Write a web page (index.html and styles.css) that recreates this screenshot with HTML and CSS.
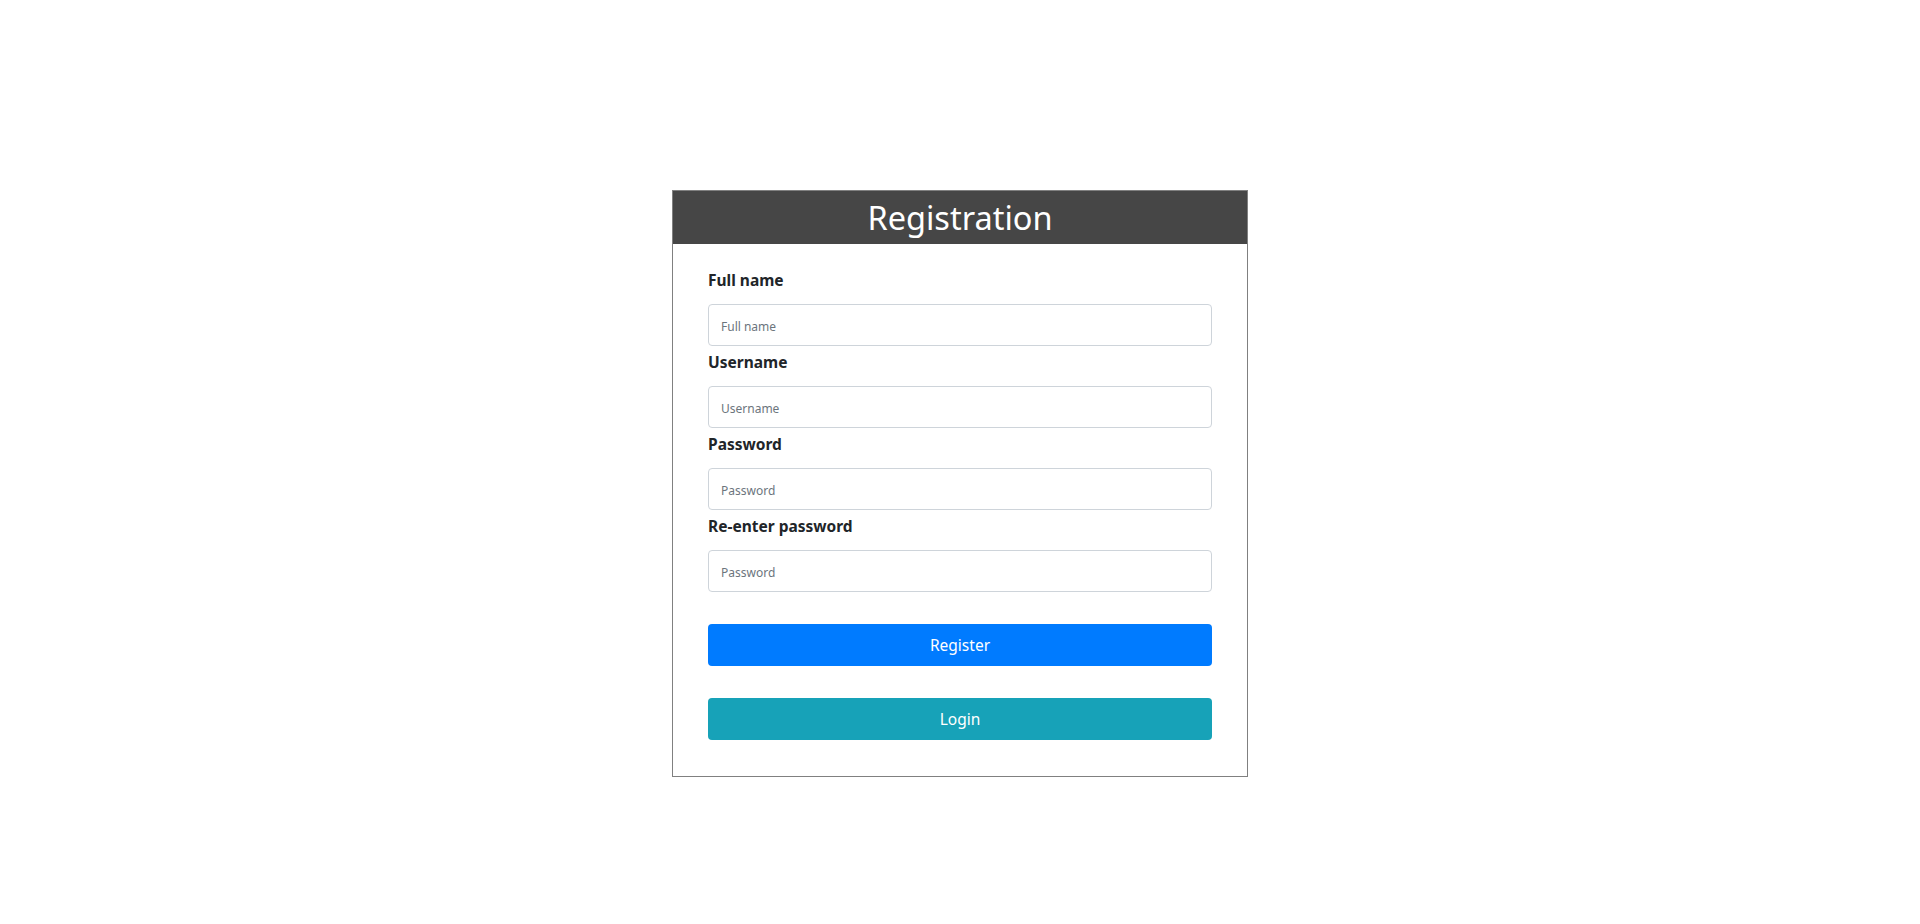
FILE: index.html
```html
<!DOCTYPE html>
<html lang="en">
<head>
  <meta charset="UTF-8">
  <title>Registration</title>
  <link rel="stylesheet" href="styles.css">
</head>
<body>

  <!-- Registration card -->
  <div class="reg-card">
    <h1 class="reg-title">Registration</h1>

    <form class="reg-form" id="regForm">
      <div class="field">
        <label for="fullname">Full name</label>
        <input type="text" id="fullname" name="fullname" placeholder="Full name">
      </div>
      <div class="field">
        <label for="username">Username</label>
        <input type="text" id="username" name="username" placeholder="Username">
      </div>
      <div class="field">
        <label for="password">Password</label>
        <input type="password" id="password" name="password" placeholder="Password">
      </div>
      <div class="field">
        <label for="password2">Re-enter password</label>
        <input type="password" id="password2" name="password2" placeholder="Password">
      </div>

      <button type="submit" class="btn btn-register">Register</button>
      <button type="button" class="btn btn-login">Login</button>
    </form>
  </div>

</body>
</html>
```

FILE: styles.css
```css
body {
  font-family: "Noto Sans", "Open Sans", sans-serif;
  margin: 0;
  padding: 0;
  background-color: #ffffff;
  color: #212529;
}

.reg-card {
  box-sizing: border-box;
  width: 576px;
  margin: 190px auto 0;
  border: 1px solid #808080;
  background: #fff;
}

.reg-title {
  margin: 0;
  background-color: #464646;
  color: #ffffff;
  text-align: center;
  font-size: 32.5px;
  font-weight: 400;
  line-height: 53px;
}

.reg-form {
  display: flex;
  flex-direction: column;
  padding: 20px 35px 36px;
}

.field label {
  display: block;
  margin: 4px 0 12px;
  font-size: 15.5px;
  font-weight: 700;
  line-height: 24px;
}

.field input {
  box-sizing: border-box;
  display: block;
  width: 100%;
  height: 42px;
  padding: 2px 12px 0;
  border: 1px solid #ced4da;
  border-radius: 4px;
  font-family: inherit;
  font-size: 12px;
  color: #495057;
  background-color: #fff;
}

.field input::placeholder {
  color: #6c757d;
}

.btn {
  box-sizing: border-box;
  width: 100%;
  height: 42px;
  margin-top: 32px;
  border: none;
  border-radius: 4px;
  color: #ffffff;
  font-family: inherit;
  font-size: 15.5px;
  cursor: pointer;
}

.btn-register {
  background-color: #007bff;
}

.btn-register:hover {
  background-color: #0069d9;
}

.btn-login {
  background-color: #17a2b8;
}

.btn-login:hover {
  background-color: #138496;
}
```
